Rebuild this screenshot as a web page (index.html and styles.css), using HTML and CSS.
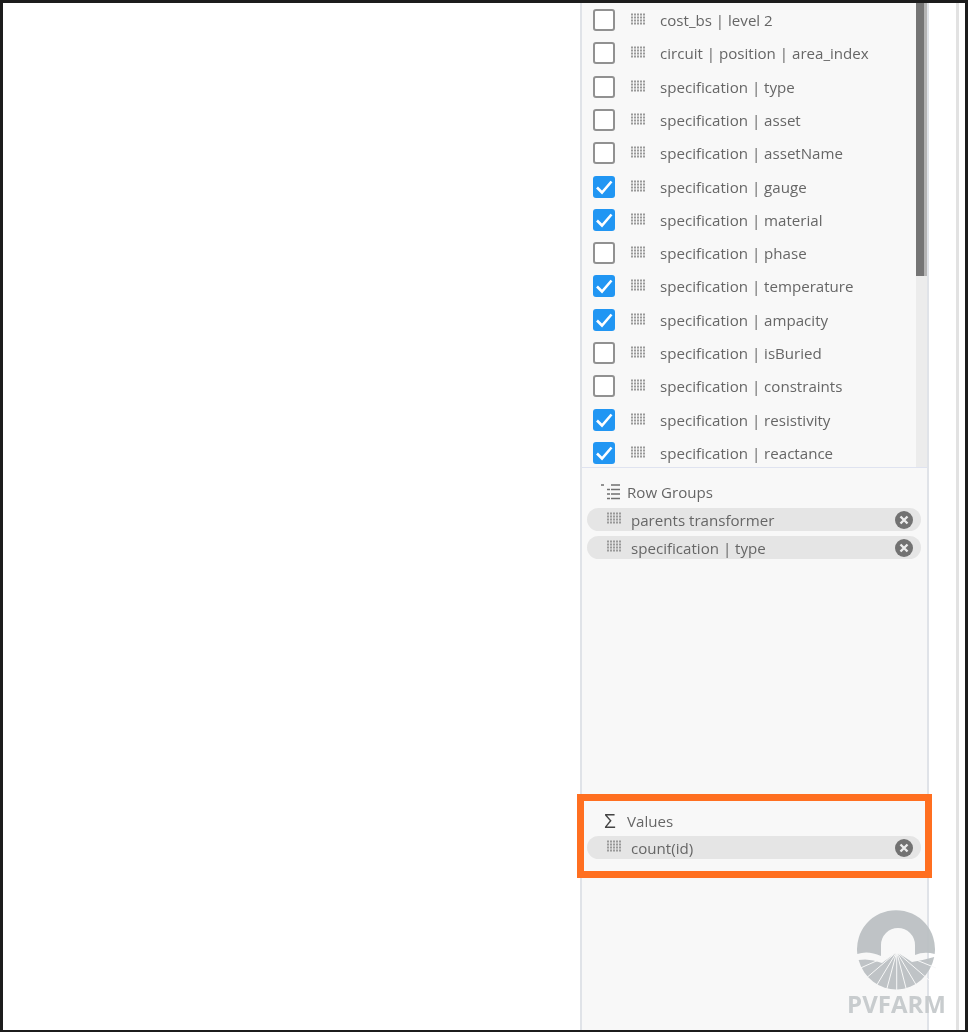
FILE: index.html
```html
<!DOCTYPE html>
<html lang="en">
<head>
    <meta charset="UTF-8">
    <title>Pivot columns</title>
    <link rel="stylesheet" href="styles.css">
</head>
<body>
    <svg class="defs" width="0" height="0">
        <symbol id="grip" viewBox="0 0 16 12">
            <path d="M1 1.5h14M1 4.5h14M1 7.5h14M1 10.5h14" fill="none" stroke="#999" stroke-width="2" stroke-dasharray="2 1"/>
        </symbol>
        <symbol id="close" viewBox="0 0 18 18">
            <circle cx="9" cy="9" r="9" fill="#727272"/>
            <path d="M5.5 5.5l7 7M12.5 5.5l-7 7" stroke="#ececec" stroke-width="2.4"/>
        </symbol>
        <symbol id="tick" viewBox="0 0 22 22">
            <path d="M4 11.500l5 5L18.500 5.500" fill="none" stroke="#fff" stroke-width="2.600"/>
        </symbol>
    </svg>

    <div class="frame">
        <div class="blank"></div>
        <div class="panel">
            <div class="columns">
                <div class="column-list">
                    <div class="column"><span class="check"></span><svg class="grip"><use href="#grip"/></svg><span>cost_bs | level 2</span></div>
                    <div class="column"><span class="check"></span><svg class="grip"><use href="#grip"/></svg><span>circuit | position | area_index</span></div>
                    <div class="column"><span class="check"></span><svg class="grip"><use href="#grip"/></svg><span>specification | type</span></div>
                    <div class="column"><span class="check"></span><svg class="grip"><use href="#grip"/></svg><span>specification | asset</span></div>
                    <div class="column"><span class="check"></span><svg class="grip"><use href="#grip"/></svg><span>specification | assetName</span></div>
                    <div class="column"><span class="check checked"><svg><use href="#tick"/></svg></span><svg class="grip"><use href="#grip"/></svg><span>specification | gauge</span></div>
                    <div class="column"><span class="check checked"><svg><use href="#tick"/></svg></span><svg class="grip"><use href="#grip"/></svg><span>specification | material</span></div>
                    <div class="column"><span class="check"></span><svg class="grip"><use href="#grip"/></svg><span>specification | phase</span></div>
                    <div class="column"><span class="check checked"><svg><use href="#tick"/></svg></span><svg class="grip"><use href="#grip"/></svg><span>specification | temperature</span></div>
                    <div class="column"><span class="check checked"><svg><use href="#tick"/></svg></span><svg class="grip"><use href="#grip"/></svg><span>specification | ampacity</span></div>
                    <div class="column"><span class="check"></span><svg class="grip"><use href="#grip"/></svg><span>specification | isBuried</span></div>
                    <div class="column"><span class="check"></span><svg class="grip"><use href="#grip"/></svg><span>specification | constraints</span></div>
                    <div class="column"><span class="check checked"><svg><use href="#tick"/></svg></span><svg class="grip"><use href="#grip"/></svg><span>specification | resistivity</span></div>
                    <div class="column"><span class="check checked"><svg><use href="#tick"/></svg></span><svg class="grip"><use href="#grip"/></svg><span>specification | reactance</span></div>
                </div>
                <div class="scrollbar"><div class="thumb"></div></div>
            </div>

            <section class="drop-zone row-groups">
                <div class="zone-title">
                    <svg class="zone-icon" viewBox="0 0 20 18">
                        <path d="M0 2h3M10 2h9M10 6.500h9M10 11h9M10 15.500h9M6 6.500h3M6 11h3M6 15.500h3" fill="none" stroke="#707070" stroke-width="1.300"/>
                    </svg>
                    <span>Row Groups</span>
                </div>
                <div class="pill"><svg class="grip"><use href="#grip"/></svg><span>parents transformer</span><svg class="close"><use href="#close"/></svg></div>
                <div class="pill"><svg class="grip"><use href="#grip"/></svg><span>specification | type</span><svg class="close"><use href="#close"/></svg></div>
            </section>

            <section class="drop-zone values">
                <div class="zone-title">
                    <span class="sigma">Σ</span>
                    <span>Values</span>
                </div>
                <div class="pill"><svg class="grip"><use href="#grip"/></svg><span>count(id)</span><svg class="close"><use href="#close"/></svg></div>
            </section>
        </div>
        <div class="gutter"></div>

        <div class="watermark">
            <svg class="logo" viewBox="0 0 80 83">
                <path d="M1.300 46A39 39 0 1 1 78.700 46Q68 43 59 47V37A17 17 0 0 0 25 37V48Q12 42 1.300 46Z" fill="#bcc1c4"/>
                <path d="M2.600 52Q14 50 26 55L40.700 44L56 54Q68 52 78.200 49A39 41 0 0 1 2.600 52Z" fill="#bcc1c4"/>
                <path d="M40.700 44L0 62M40.700 44L8 72M40.700 44L19 80M40.700 44L30 84M40.700 44V84M40.700 44L51 84M40.700 44L62 80M40.700 44L73 72M40.700 44L80 60" fill="none" stroke="#f8f8f8" stroke-width="1"/>
            </svg>
            <div class="brand">PVFARM</div>
        </div>
    </div>
</body>
</html>
```

FILE: styles.css
```css
html, body {
    margin: 0;
    height: 100%;
    background: #fff;
}

body {
    font-family: "Open Sans", "Noto Sans", sans-serif;
    font-size: 15.1px;
    color: #666;
    overflow: hidden;
}

.defs {
    position: absolute;
}

.frame {
    position: relative;
    display: flex;
    box-sizing: border-box;
    height: 1032px;
    border: solid #1c1c1c;
    border-width: 3px 3px 2px 3px;
}

.blank {
    width: 577px;
}

.panel {
    display: flex;
    flex-direction: column;
    box-sizing: border-box;
    width: 349px;
    background: #f8f8f8;
    border-left: 2px solid #e0e3e8;
    border-right: 2px solid #e0e3e8;
    filter: blur(0.7px);
}

.columns {
    display: flex;
    height: 464px;
    flex: none;
    border-bottom: 1px solid #dfe3f0;
}

.column-list {
    flex: 1;
    padding: 0.4px 0 0 11px;
}

.column {
    display: flex;
    align-items: center;
    height: 33.3px;
    white-space: nowrap;
}

.check {
    box-sizing: border-box;
    width: 22px;
    height: 22px;
    flex: none;
    background: #fff;
    border: 2px solid #919191;
    border-radius: 3px;
}

.check.checked {
    background: #2196f3;
    border: 0;
}

.check svg {
    display: block;
    width: 22px;
    height: 22px;
}

.grip {
    width: 16px;
    height: 12px;
    flex: none;
}

.column .grip {
    margin: -2px 14px 0 15px;
}

.scrollbar {
    width: 11px;
    background: #ececec;
}

.thumb {
    height: 273px;
    background: #757575;
    border-right: 3px solid #b4b4b4;
}

.drop-zone {
    padding: 0 6px 0 5px;
}

.row-groups {
    height: 331px;
    flex: none;
    padding-top: 12px;
    box-sizing: border-box;
}

.values {
    padding-top: 10px;
    padding-bottom: 9px;
    outline: 7px solid #ff6f20;
    outline-offset: -2px;
}

.zone-title {
    display: flex;
    align-items: center;
    height: 24px;
    margin-bottom: 4px;
    padding-left: 14px;
}

.values .zone-title {
    margin-bottom: 3px;
}

.zone-icon {
    width: 20px;
    height: 18px;
    margin-right: 6px;
}

.sigma {
    width: 26px;
    font-size: 20px;
    line-height: 24px;
    color: #444;
    text-align: center;
    margin-left: -4px;
    margin-right: 4px;
}

.pill {
    display: flex;
    align-items: center;
    box-sizing: border-box;
    height: 23px;
    margin-bottom: 5px;
    padding: 0 8px 0 19px;
    background: #e5e5e5;
    border-radius: 12px;
}

.pill .grip {
    margin-right: 9px;
    margin-top: -3px;
}

.pill span {
    flex: 1;
}

.close {
    width: 18px;
    height: 18px;
}

.watermark {
    position: absolute;
    left: 841px;
    top: 905px;
    width: 104px;
    display: flex;
    flex-direction: column;
    align-items: center;
    opacity: 0.95;
    filter: blur(0.4px);
}

.logo {
    display: block;
    width: 80px;
    height: 83px;
}

.brand {
    font-family: "Open Sans", sans-serif;
    font-size: 24px;
    font-weight: 700;
    line-height: 26px;
    color: #c6cacc;
    margin-left: 1px;
}

.gutter {
    flex: 1;
    background: linear-gradient(to right, #fff 27.5px, #e2e2e2 27.5px, #e2e2e2 30px, #fff 30px);
}
```
